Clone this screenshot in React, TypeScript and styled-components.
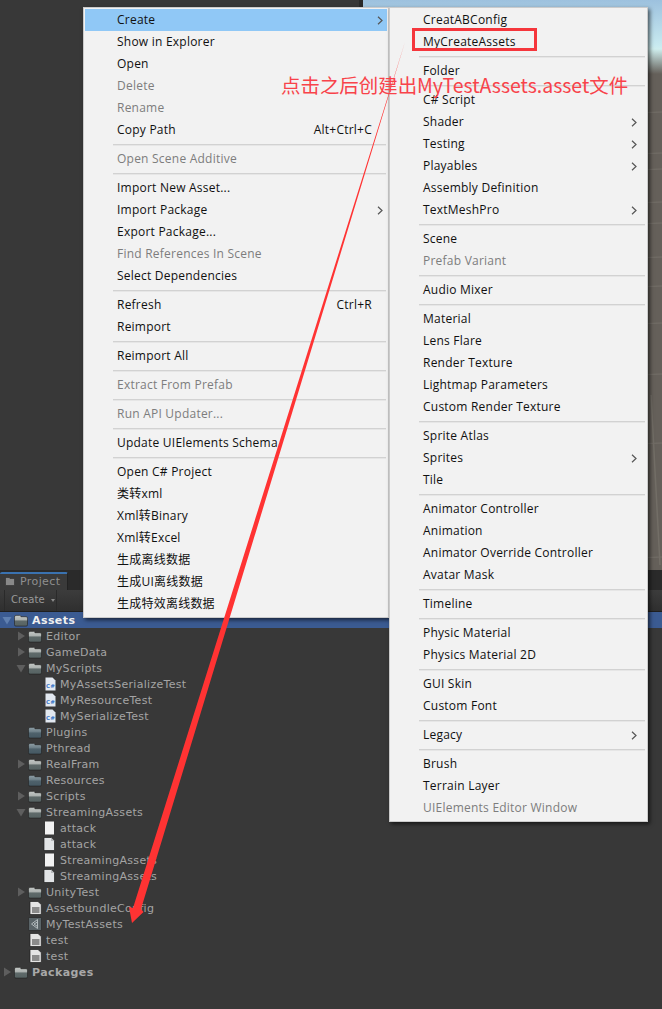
import React from "react";
import styled, { createGlobalStyle } from "styled-components";

const Global = createGlobalStyle`
  html, body { margin: 0; padding: 0; background: #383838; }
`;

const Page = styled.div`
  position: relative;
  width: 662px;
  height: 1009px;
  overflow: hidden;
  background: #383838;
  display: flex;
  flex-direction: column;
`;

const TopArea = styled.div`
  height: 570px;
  display: flex;
  flex: none;
`;

const LeftPane = styled.div`
  width: 359px;
  background: #383838;
  border-right: 4px solid #2a2a2a;
`;

const Scene = styled.div`
  flex: 1;
  background: linear-gradient(180deg, #9dc1de 0, #c8eaf0 45px, #cfeeee 49px, #65605a 74px, #65605a 100%);
`;

const SceneDrawing = styled.svg`
  display: block;
  width: 100%;
  height: 100%;
`;

const ProjectPanel = styled.div`
  flex: 1;
  display: flex;
  flex-direction: column;
  font-family: "DejaVu Sans", sans-serif;
`;

const TabBar = styled.div`
  height: 20px;
  background: #2a2a2a;
  display: flex;
  align-items: flex-end;
`;

const Tab = styled.div`
  width: 62px;
  height: 16px;
  padding: 0 0 2px 5px;
  box-sizing: content-box;
  height: 14px;
  background: #3a3a3a;
  border-top: 2px solid #3a72b0;
  border-right: 1px solid #222;
  border-radius: 2px 2px 0 0;
  display: flex;
  align-items: center;
  gap: 5px;
  color: #8f8f8f;
  font-size: 11px;
  letter-spacing: 0.4px;
`;

const Toolbar = styled.div`
  height: 21px;
  background: linear-gradient(180deg, #3c3c3c, #2f2f2f);
  border-bottom: 1px solid #1f1f1f;
  display: flex;
  padding-left: 4px;
`;

const ToolButton = styled.div`
  width: 53px;
  box-sizing: border-box;
  border-left: 1px solid #2a2a2a;
  border-right: 1px solid #2a2a2a;
  display: flex;
  align-items: center;
  gap: 6px;
  padding: 0 0 3px 6px;
  color: #9a9a9a;
  font-size: 10px;
  letter-spacing: 0.1px;
`;

const Caret = styled.span`
  width: 0;
  height: 0;
  margin-top: 2px;
  border-left: 2.5px solid transparent;
  border-right: 2.5px solid transparent;
  border-top: 3px solid #8a8a8a;
`;

const Tree = styled.div`
  display: flex;
  flex-direction: column;
`;

const Row = styled.div<{ $level: number; $selected?: boolean; $root?: boolean }>`
  height: 16px;
  display: flex;
  align-items: center;
  padding-left: ${(p) => p.$level * 14}px;
  background: ${(p) => (p.$selected ? "#3b5b92" : "transparent")};
  color: ${(p) => (p.$selected ? "#f0f0f0" : p.$root ? "#a8a8a8" : "#a4a4a4")};
  font-size: 11px;
  font-weight: ${(p) => (p.$root ? 700 : 400)};
  letter-spacing: ${(p) => (p.$root ? "0.42px" : "0.3px")};
  white-space: nowrap;
`;

const Slot = styled.span`
  flex: none;
  width: 14px;
  height: 16px;
  display: flex;
  align-items: center;
  justify-content: center;
`;

const RowLabel = styled.span`
  margin-left: 4px;
`;

const Menu = styled.div<{ $left: number; $width: number; $height: number; $z: number; $inset: number }>`
  position: absolute;
  left: ${(p) => p.$left}px;
  top: 7px;
  width: ${(p) => p.$width}px;
  height: ${(p) => p.$height}px;
  box-sizing: border-box;
  z-index: ${(p) => p.$z};
  padding: 1px;
  background: #f2f2f2;
  border: 1px solid #cbcbcb;
  box-shadow: 2px 2px 4px rgba(0, 0, 0, 0.6);
  font-family: "Open Sans", "Noto Sans CJK SC", sans-serif;
  font-size: 12px;
  letter-spacing: 0.23px;
  --menu-inset: ${(p) => p.$inset}px;
`;

const Item = styled.div<{ $disabled?: boolean; $active?: boolean }>`
  height: 22px;
  display: grid;
  grid-template-columns: 1fr auto 15px;
  align-items: center;
  padding-left: 32px;
  padding-right: var(--menu-inset);
  padding-bottom: 1px;
  box-sizing: border-box;
  line-height: 18px;
  color: ${(p) => (p.$disabled ? "#7d7d7d" : "#101010")};
  background: ${(p) => (p.$active ? "#90c8f6" : "transparent")};
  white-space: nowrap;
`;

const Shortcut = styled.span`
  color: #101010;
`;

const Chevron = styled.svg`
  justify-self: center;
  width: 6px;
  height: 9px;
  margin-top: 1px;
`;

const Separator = styled.div`
  height: 7px;
  margin: 0 1px 0 28px;
  display: flex;
  align-items: center;
  &::before {
    content: "";
    flex: 1;
    height: 1px;
    background: #d2d2d2;
    box-shadow: 0 1px 0 #e6e6e6;
  }
`;

const RedBox = styled.div`
  position: absolute;
  left: 412px;
  top: 28px;
  width: 125px;
  height: 23px;
  box-sizing: border-box;
  border: 3px solid #f5363c;
  z-index: 5;
`;

const Note = styled.div`
  position: absolute;
  left: 281px;
  top: 72px;
  z-index: 6;
  color: #f8434a;
  font-family: "Noto Sans CJK SC", sans-serif;
  font-size: 19.45px;
  line-height: 26px;
  white-space: nowrap;
`;

const ArrowLayer = styled.svg`
  position: absolute;
  left: 0;
  top: 0;
  z-index: 4;
  pointer-events: none;
`;

type Entry = { t?: string; d?: boolean; a?: boolean; sub?: boolean; key?: string } | null;

const mainItems: Entry[] = [
  { t: "Create", a: true, sub: true },
  { t: "Show in Explorer" },
  { t: "Open" },
  { t: "Delete", d: true },
  { t: "Rename", d: true },
  { t: "Copy Path", key: "Alt+Ctrl+C" },
  null,
  { t: "Open Scene Additive", d: true },
  null,
  { t: "Import New Asset..." },
  { t: "Import Package", sub: true },
  { t: "Export Package..." },
  { t: "Find References In Scene", d: true },
  { t: "Select Dependencies" },
  null,
  { t: "Refresh", key: "Ctrl+R" },
  { t: "Reimport" },
  null,
  { t: "Reimport All" },
  null,
  { t: "Extract From Prefab", d: true },
  null,
  { t: "Run API Updater...", d: true },
  null,
  { t: "Update UIElements Schema" },
  null,
  { t: "Open C# Project" },
  { t: "类转xml" },
  { t: "Xml转Binary" },
  { t: "Xml转Excel" },
  { t: "生成离线数据" },
  { t: "生成UI离线数据" },
  { t: "生成特效离线数据" },
];

const subItems: Entry[] = [
  { t: "CreatABConfig" },
  { t: "MyCreateAssets" },
  null,
  { t: "Folder" },
  null,
  { t: "C# Script" },
  { t: "Shader", sub: true },
  { t: "Testing", sub: true },
  { t: "Playables", sub: true },
  { t: "Assembly Definition" },
  { t: "TextMeshPro", sub: true },
  null,
  { t: "Scene" },
  { t: "Prefab Variant", d: true },
  null,
  { t: "Audio Mixer" },
  null,
  { t: "Material" },
  { t: "Lens Flare" },
  { t: "Render Texture" },
  { t: "Lightmap Parameters" },
  { t: "Custom Render Texture" },
  null,
  { t: "Sprite Atlas" },
  { t: "Sprites", sub: true },
  { t: "Tile" },
  null,
  { t: "Animator Controller" },
  { t: "Animation" },
  { t: "Animator Override Controller" },
  { t: "Avatar Mask" },
  null,
  { t: "Timeline" },
  null,
  { t: "Physic Material" },
  { t: "Physics Material 2D" },
  null,
  { t: "GUI Skin" },
  { t: "Custom Font" },
  null,
  { t: "Legacy", sub: true },
  null,
  { t: "Brush" },
  { t: "Terrain Layer" },
  { t: "UIElements Editor Window", d: true },
];

const MenuRows = ({ items }: { items: Entry[] }) => (
  <>
    {items.map((e, i) =>
      e === null ? (
        <Separator key={i} />
      ) : (
        <Item key={i} $disabled={e.d} $active={e.a}>
          <span>{e.t}</span>
          {e.key ? <Shortcut>{e.key}</Shortcut> : <span />}
          {e.sub ? (
            <Chevron viewBox="0 0 6 9">
              <path d="M1 0.8 L5 4.5 L1 8.2" fill="none" stroke="#555" strokeWidth="1.2" />
            </Chevron>
          ) : (
            <span />
          )}
        </Item>
      )
    )}
  </>
);

const Triangle = ({ open, selected }: { open?: boolean; selected?: boolean }) => (
  <svg width="12" height="12" viewBox="0 0 12 12">
    {open ? (
      <path d="M1.5 3 H10.5 L6 10.5 Z" fill={selected ? "#5f7fb0" : "#5e5e5e"} />
    ) : (
      <path d="M3 1.5 V10.5 L10 6 Z" fill="#5e5e5e" />
    )}
  </svg>
);

const FolderIcon = ({ blue }: { blue?: boolean }) => {
  const id = blue ? "fb" : "fg";
  return (
    <svg width="15" height="13" viewBox="0 0 15 13">
      <defs>
        <linearGradient id={id} x1="0" y1="0" x2="0" y2="1">
          <stop offset="0" stopColor={blue ? "#8f9fa6" : "#c4c8c6"} />
          <stop offset="0.45" stopColor={blue ? "#6a7c85" : "#aab0ae"} />
          <stop offset="0.5" stopColor={blue ? "#4f626c" : "#5f6a6a"} />
          <stop offset="1" stopColor={blue ? "#455862" : "#566262"} />
        </linearGradient>
      </defs>
      <path d="M0.5 3 Q0.5 1 2 1 H6 Q7 1 7.5 2.4 H13 Q14.5 2.4 14.5 4 V11 Q14.5 12.5 13 12.5 H2 Q0.5 12.5 0.5 11 Z" fill={`url(#${id})`} stroke="#222" strokeWidth="0.7" />
    </svg>
  );
};

const CSharpIcon = () => (
  <svg width="11" height="14" viewBox="0 0 11 14" style={{ marginLeft: 2 }}>
    <path d="M0.5 0.5 H7.5 L10.5 3.5 V13.5 H0.5 Z" fill="#e2e8f0" />
    <text x="1" y="10.5" fontFamily="DejaVu Sans" fontWeight="700" fontSize="5.5" fill="#3b78c8">C#</text>
  </svg>
);

const PlainFile = ({ fold }: { fold?: boolean }) => (
  <svg width="14" height="14" viewBox="0 0 14 14">
    {fold ? (
      <path d="M2 0.5 H9 L12.5 4 V13.5 H2 Z" fill="#e2e4e6" stroke="#1e1e1e" strokeWidth="0.7" />
    ) : (
      <path d="M3 0.5 H12 V13.5 H3 Z" fill="#f2f2f2" />
    )}
    {fold && <path d="M9 0.5 V4 H12.5" fill="#b8babc" />}
  </svg>
);

const TextFile = () => (
  <svg width="13" height="14" viewBox="0 0 13 14">
    <path d="M1 0.5 H9 L12.3 3.5 V13.5 H1 Z" fill="#e4e4e4" stroke="#1e1e1e" strokeWidth="0.7" />
    <path d="M3 7 H10.5 M3 9 H10.5 M3 11 H10.5" stroke="#333" strokeWidth="1" />
  </svg>
);

const UnityAsset = () => (
  <svg width="14" height="14" viewBox="0 0 14 14">
    <rect x="0.5" y="0.5" width="13" height="13" rx="1" fill="#5a6468" stroke="#262626" strokeWidth="0.7" />
    <path d="M9.5 2.5 L3.5 7 L9.5 11.5 Z M9.5 5 L6 7 L9.5 9.5" fill="none" stroke="#b4bcbf" strokeWidth="1" />
  </svg>
);

type Node = { t: string; l: number; arrow?: "open" | "closed"; icon: React.ReactNode; sel?: boolean; root?: boolean };

const nodes: Node[] = [
  { t: "Assets", l: 0, arrow: "open", icon: <FolderIcon />, sel: true, root: true },
  { t: "Editor", l: 1, arrow: "closed", icon: <FolderIcon /> },
  { t: "GameData", l: 1, arrow: "closed", icon: <FolderIcon /> },
  { t: "MyScripts", l: 1, arrow: "open", icon: <FolderIcon /> },
  { t: "MyAssetsSerializeTest", l: 2, icon: <CSharpIcon /> },
  { t: "MyResourceTest", l: 2, icon: <CSharpIcon /> },
  { t: "MySerializeTest", l: 2, icon: <CSharpIcon /> },
  { t: "Plugins", l: 1, icon: <FolderIcon blue /> },
  { t: "Pthread", l: 1, icon: <FolderIcon blue /> },
  { t: "RealFram", l: 1, arrow: "closed", icon: <FolderIcon /> },
  { t: "Resources", l: 1, icon: <FolderIcon blue /> },
  { t: "Scripts", l: 1, arrow: "closed", icon: <FolderIcon /> },
  { t: "StreamingAssets", l: 1, arrow: "open", icon: <FolderIcon /> },
  { t: "attack", l: 2, icon: <PlainFile /> },
  { t: "attack", l: 2, icon: <PlainFile fold /> },
  { t: "StreamingAssets", l: 2, icon: <PlainFile /> },
  { t: "StreamingAssets", l: 2, icon: <PlainFile fold /> },
  { t: "UnityTest", l: 1, arrow: "closed", icon: <FolderIcon /> },
  { t: "AssetbundleConfig", l: 1, icon: <TextFile /> },
  { t: "MyTestAssets", l: 1, icon: <UnityAsset /> },
  { t: "test", l: 1, icon: <TextFile /> },
  { t: "test", l: 1, icon: <TextFile /> },
  { t: "Packages", l: 0, arrow: "closed", icon: <FolderIcon />, root: true },
];

const groundLines = [118, 159, 175, 208, 229, 263, 292, 329, 380, 449, 563];

export default function App() {
  return (
    <Page>
      <Global />
      <TopArea>
        <LeftPane />
        <Scene>
          <SceneDrawing viewBox="0 0 299 570" preserveAspectRatio="none">
            {groundLines.map((y) => (
              <path key={y} d={`M0 ${y + 3} L299 ${y - 6}`} stroke="#757069" strokeWidth="1" fill="none" />
            ))}
            <path d="M288 395 L297 565" stroke="#736e67" strokeWidth="1.5" fill="none" />
          </SceneDrawing>
        </Scene>
      </TopArea>
      <ProjectPanel>
        <TabBar>
          <Tab>
            <svg width="10" height="9" viewBox="0 0 10 9">
              <path d="M0.5 1.5 Q0.5 0.5 1.5 0.5 H4 L5 1.5 H9 Q9.5 1.5 9.5 2.5 V8 Q9.5 8.5 9 8.5 H1 Q0.5 8.5 0.5 8 Z" fill="#888" stroke="#222" strokeWidth="0.5" />
            </svg>
            <span>Project</span>
          </Tab>
        </TabBar>
        <Toolbar>
          <ToolButton>
            <span>Create</span>
            <Caret />
          </ToolButton>
        </Toolbar>
        <Tree>
          {nodes.map((n, i) => (
            <Row key={i} $level={n.l} $selected={n.sel} $root={n.root}>
              <Slot>{n.arrow && <Triangle open={n.arrow === "open"} selected={n.sel} />}</Slot>
              <Slot>{n.icon}</Slot>
              <RowLabel>{n.t}</RowLabel>
            </Row>
          ))}
        </Tree>
      </ProjectPanel>

      <Menu $left={83} $width={306} $height={611} $z={2} $inset={0}>
        <MenuRows items={mainItems} />
      </Menu>
      <Menu $left={389} $width={259} $height={815} $z={3} $inset={5}>
        <MenuRows items={subItems} />
      </Menu>

      <ArrowLayer width="662" height="1009" viewBox="0 0 662 1009">
        <path d="M405 42 L141 909 L143.5 912 L132 923 L129 907 L133 908 Z" fill="#ff3333" />
      </ArrowLayer>
      <RedBox />
      <Note>点击之后创建出MyTestAssets.asset文件</Note>
    </Page>
  );
}
